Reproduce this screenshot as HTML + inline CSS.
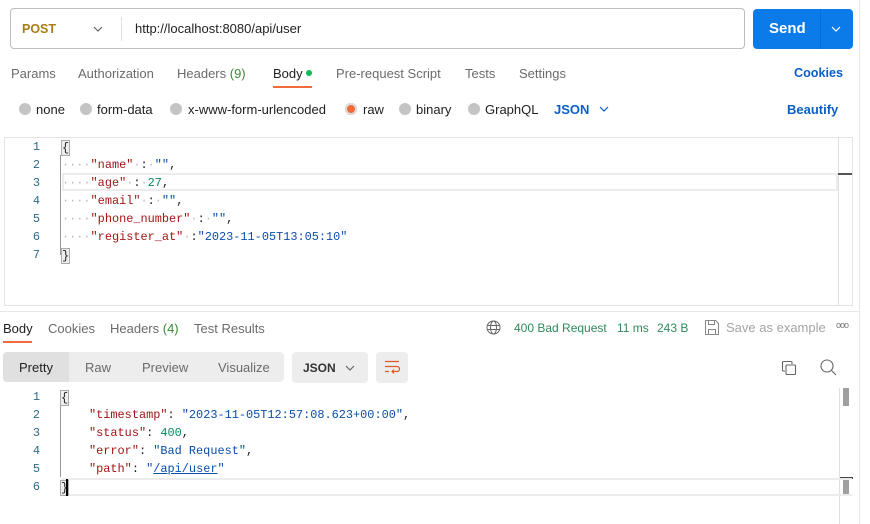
<!DOCTYPE html>
<html><head><meta charset="utf-8"><style>
*{margin:0;padding:0;box-sizing:border-box}
body{width:870px;height:524px;background:#fff;font-family:"Liberation Sans",sans-serif;font-size:13px;color:#212121;position:relative;overflow:hidden}
.a{position:absolute;white-space:nowrap}
.g{color:#6b6b6b}
.mono{font-family:"Liberation Mono",monospace;font-size:11.9px}
.ln{color:#2a6a8a;width:20px;text-align:right}
.k{color:#a31515}.s{color:#0b4fa8}.n{color:#098658}.d{color:#bbb}
.rad{position:absolute;width:12px;height:12px;border-radius:50%;background:#c4c4c4}
</style></head><body>
<div class="a" style="left:859px;top:0;width:1px;height:524px;background:#e6e6e6"></div>
<div class="a" style="left:10px;top:8px;width:735px;height:41px;border:1px solid #bdbdbd;border-radius:4px"></div>
<div class="a" style="left:22px;top:22px;font-weight:bold;color:#a87c16;font-size:12.5px">POST</div>
<svg class="a" style="left:93px;top:25px" width="10" height="8"><path d="M1 2l4 4 4-4" fill="none" stroke="#666" stroke-width="1.2"/></svg>
<div class="a" style="left:121px;top:17px;width:1px;height:24px;background:#e0e0e0"></div>
<div class="a" style="left:135px;top:21px;color:#212121">http://localhost:8080/api/user</div>
<div class="a" style="left:753px;top:9px;width:100px;height:40px;background:#0c7bea;border-radius:4px"></div>
<div class="a" style="left:820px;top:9px;width:1px;height:40px;background:#0a6ccf"></div>
<div class="a" style="left:769px;top:20px;color:#fff;font-weight:bold;font-size:15px">Send</div>
<svg class="a" style="left:831px;top:26px" width="10" height="7"><path d="M1 1l4 4 4-4" fill="none" stroke="#fff" stroke-width="1.2"/></svg>
<div class="a g" style="left:11px;top:66px">Params</div>
<div class="a g" style="left:78px;top:66px">Authorization</div>
<div class="a g" style="left:177px;top:66px">Headers <span style="color:#3a8a3a">(9)</span></div>
<div class="a" style="left:273px;top:66px">Body</div>
<div class="a" style="left:306px;top:70px;width:6px;height:6px;border-radius:50%;background:#0cbb52"></div>
<div class="a" style="left:273px;top:86px;width:39px;height:2px;background:#f26b3a"></div>
<div class="a g" style="left:336px;top:66px">Pre-request Script</div>
<div class="a g" style="left:465px;top:66px">Tests</div>
<div class="a g" style="left:519px;top:66px">Settings</div>
<div class="a" style="left:794px;top:66px;color:#0b5fc7;font-weight:bold;font-size:12.6px">Cookies</div>
<div class="rad" style="left:19px;top:103px"></div><div class="a" style="left:36px;top:102px">none</div>
<div class="rad" style="left:80px;top:103px"></div><div class="a" style="left:97px;top:102px">form-data</div>
<div class="rad" style="left:170px;top:103px"></div><div class="a" style="left:188px;top:102px">x-www-form-urlencoded</div>
<div class="rad" style="left:345px;top:103px;background:#f26b3a;box-shadow:0 0 0 2px #ddd inset"></div><div class="a" style="left:363px;top:102px">raw</div>
<div class="rad" style="left:399px;top:103px"></div><div class="a" style="left:416px;top:102px">binary</div>
<div class="rad" style="left:468px;top:103px"></div><div class="a" style="left:485px;top:102px">GraphQL</div>
<div class="a" style="left:554px;top:102px;color:#0b5fc7;font-weight:bold">JSON</div>
<svg class="a" style="left:599px;top:106px" width="10" height="7"><path d="M1 1l4 4 4-4" fill="none" stroke="#0b5fc7" stroke-width="1.2"/></svg>
<div class="a" style="left:787px;top:102px;color:#0b5fc7;font-weight:bold">Beautify</div>
<div class="a" style="left:4px;top:137px;width:849px;height:169px;border:1px solid #e3e3e3"></div>
<div class="a" style="left:838px;top:138px;width:1px;height:167px;background:#e0e0e0"></div>
<div class="a" style="left:838px;top:173px;width:14px;height:2px;background:#555"></div>
<div class="a" style="left:62px;top:173px;width:776px;height:18px;border:2px solid #ececec"></div>
<div class="a" style="left:60px;top:155px;width:1px;height:100px;background:#999"></div>
<div class="mono">
<div class="a ln" style="left:20px;top:140px">1</div><div class="a" style="left:61px;top:140px;border:1px solid #aaa;background:#eee;line-height:14px">{</div>
<div class="a ln" style="left:20px;top:158px">2</div><div class="a" style="left:62px;top:158px"><span class="d">····</span><span class="k">"name"</span><span class="d">·</span>:<span class="d">·</span><span class="s">""</span>,</div>
<div class="a ln" style="left:20px;top:176px">3</div><div class="a" style="left:62px;top:176px"><span class="d">····</span><span class="k">"age"</span><span class="d">·</span>:<span class="d">·</span><span class="n">27</span>,</div>
<div class="a ln" style="left:20px;top:194px">4</div><div class="a" style="left:62px;top:194px"><span class="d">····</span><span class="k">"email"</span><span class="d">·</span>:<span class="d">·</span><span class="s">""</span>,</div>
<div class="a ln" style="left:20px;top:212px">5</div><div class="a" style="left:62px;top:212px"><span class="d">····</span><span class="k">"phone_number"</span><span class="d">·</span>:<span class="d">·</span><span class="s">""</span>,</div>
<div class="a ln" style="left:20px;top:230px">6</div><div class="a" style="left:62px;top:230px"><span class="d">····</span><span class="k">"register_at"</span><span class="d">·</span>:<span class="s">"2023-11-05T13:05:10"</span></div>
<div class="a ln" style="left:20px;top:248px">7</div><div class="a" style="left:61px;top:248px;border:1px solid #aaa;background:#eee;line-height:14px">}</div>
</div>
<div class="a" style="left:0;top:311px;width:859px;height:1px;background:#e6e6e6"></div>
<div class="a" style="left:3px;top:321px">Body</div>
<div class="a" style="left:3px;top:341px;width:29px;height:2px;background:#f26b3a"></div>
<div class="a g" style="left:48px;top:321px">Cookies</div>
<div class="a g" style="left:110px;top:321px">Headers <span style="color:#3a8a3a">(4)</span></div>
<div class="a g" style="left:194px;top:321px">Test Results</div>
<svg class="a" style="left:486px;top:320px" width="15" height="15" fill="none" stroke="#666" stroke-width="1"><circle cx="7.5" cy="7.5" r="6.5"/><ellipse cx="7.5" cy="7.5" rx="3" ry="6.5"/><path d="M1 5.5h13M1 9.5h13"/></svg>
<div class="a" style="left:514px;top:321px;color:#2f8a5a;font-size:12px">400 Bad Request</div>
<div class="a" style="left:617px;top:321px;color:#2f8a5a;font-size:12px">11 ms</div>
<div class="a" style="left:657px;top:321px;color:#2f8a5a;font-size:12px">243 B</div>
<svg class="a" style="left:705px;top:320px" width="14" height="15" fill="none" stroke="#888" stroke-width="1"><path d="M.5.5h10l3 3v11H.5z M3.5.5v4h6v-4 M3.5 14.5v-5h7v5"/></svg>
<div class="a" style="left:726px;top:320px;color:#a5a5a5">Save as example</div>
<div class="a" style="left:836px;top:320px;color:#777;font-size:9px;letter-spacing:-1px">ooo</div>
<div class="a" style="left:3px;top:352px;width:281px;height:30px;background:#ededed;border-radius:4px"></div>
<div class="a" style="left:3px;top:352px;width:66px;height:30px;background:#e0e0e0;border-radius:4px 0 0 4px"></div>
<div class="a" style="left:19px;top:360px">Pretty</div>
<div class="a g" style="left:85px;top:360px">Raw</div>
<div class="a g" style="left:142px;top:360px">Preview</div>
<div class="a g" style="left:218px;top:360px">Visualize</div>
<div class="a" style="left:292px;top:352px;width:76px;height:31px;background:#ededed;border-radius:4px"></div>
<div class="a" style="left:303px;top:361px;font-weight:bold;font-size:12px;color:#333">JSON</div>
<svg class="a" style="left:345px;top:365px" width="10" height="7"><path d="M1 1l4 4 4-4" fill="none" stroke="#666" stroke-width="1.2"/></svg>
<div class="a" style="left:376px;top:352px;width:32px;height:31px;background:#ededed;border-radius:4px"></div>
<svg class="a" style="left:384px;top:360px" width="16" height="15" fill="none" stroke="#e05a2a" stroke-width="1.2"><path d="M1 1.5h14M1 6.5h12a2.5 2.5 0 010 5H8M10 9.5l-2 2 2 2M1 11.5h4"/></svg>
<svg class="a" style="left:781px;top:360px" width="16" height="16" fill="none" stroke="#666" stroke-width="1.1"><path d="M4 11H2.5a1 1 0 01-1-1V2.5a1 1 0 011-1H10a1 1 0 011 1V4"/><rect x="5" y="5" width="9.5" height="9.5" rx="1"/></svg>
<svg class="a" style="left:820px;top:359px" width="17" height="17" fill="none" stroke="#666" stroke-width="1.1"><circle cx="7" cy="7" r="6"/><path d="M11.5 11.5l4.5 4.5"/></svg>
<div class="a" style="left:839px;top:388px;width:1px;height:136px;background:#e0e0e0"></div>
<div class="a" style="left:843px;top:388px;width:6px;height:18px;background:#a0a0a0"></div>
<div class="a" style="left:840px;top:477px;width:13px;height:2px;background:#444"></div>
<div class="a" style="left:843px;top:479px;width:6px;height:16px;background:#a0a0a0"></div>
<div class="a" style="left:62px;top:478px;width:790px;height:18px;border-top:2px solid #ececec;border-bottom:2px solid #ececec"></div>
<div class="a" style="left:60px;top:405px;width:1px;height:72px;background:#999"></div>
<div class="mono">
<div class="a ln" style="left:20px;top:390px">1</div><div class="a" style="left:60px;top:390px;border:1px solid #aaa;background:#eee;line-height:14px">{</div>
<div class="a ln" style="left:20px;top:408px">2</div><div class="a" style="left:89px;top:408px"><span class="k">"timestamp"</span>: <span class="s">"2023-11-05T12:57:08.623+00:00"</span>,</div>
<div class="a ln" style="left:20px;top:426px">3</div><div class="a" style="left:89px;top:426px"><span class="k">"status"</span>: <span class="n">400</span>,</div>
<div class="a ln" style="left:20px;top:444px">4</div><div class="a" style="left:89px;top:444px"><span class="k">"error"</span>: <span class="s">"Bad Request"</span>,</div>
<div class="a ln" style="left:20px;top:462px">5</div><div class="a" style="left:89px;top:462px"><span class="k">"path"</span>: <span class="s">"<u>/api/user</u>"</span></div>
<div class="a ln" style="left:20px;top:480px">6</div><div class="a" style="left:60px;top:480px;border:1px solid #aaa;background:#eee;line-height:14px">}</div>
<div class="a" style="left:66px;top:479px;width:2px;height:17px;background:#000"></div>
</div>
</body></html>
